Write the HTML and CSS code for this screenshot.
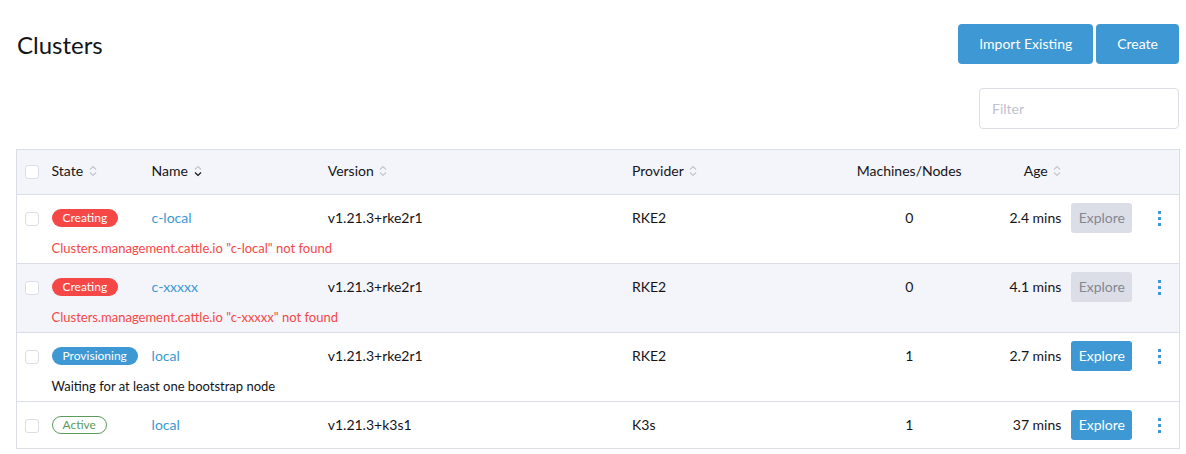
FILE: index.html
```html
<!DOCTYPE html>
<html lang="en">
  <head>
    <meta charset="UTF-8" />
    <title>Clusters</title>
    <link rel="stylesheet" href="styles.css">
  </head>
  <body>
    <div class="page">
      <header class="title-bar">
        <h1>Clusters</h1>
        <div class="actions">
          <button class="btn">Import Existing</button>
          <button class="btn">Create</button>
        </div>
      </header>

      <div class="filter-bar">
        <input type="text" class="filter" placeholder="Filter" />
      </div>

      <table class="clusters">
        <colgroup>
          <col style="width: 27px" />
          <col style="width: 100px" />
          <col style="width: 176px" />
          <col style="width: 304px" />
          <col style="width: 206px" />
          <col style="width: 158px" />
          <col style="width: 83px" />
          <col style="width: 69px" />
          <col style="width: 39px" />
        </colgroup>
        <thead>
          <tr>
            <th><span class="check"></span></th>
            <th>State <svg class="sort" viewBox="0 0 8 12"><path d="M1 4.5 4 1.5 7 4.5" /><path d="M1 7.5 4 10.5 7 7.5" /></svg></th>
            <th>Name <svg class="sort active" viewBox="0 0 8 12"><path d="M1 4.5 4 1.5 7 4.5" /><path class="on" d="M1 7.5 4 10.5 7 7.5" /></svg></th>
            <th>Version <svg class="sort" viewBox="0 0 8 12"><path d="M1 4.5 4 1.5 7 4.5" /><path d="M1 7.5 4 10.5 7 7.5" /></svg></th>
            <th>Provider <svg class="sort" viewBox="0 0 8 12"><path d="M1 4.5 4 1.5 7 4.5" /><path d="M1 7.5 4 10.5 7 7.5" /></svg></th>
            <th class="center">Machines/Nodes</th>
            <th class="right">Age <svg class="sort" viewBox="0 0 8 12"><path d="M1 4.5 4 1.5 7 4.5" /><path d="M1 7.5 4 10.5 7 7.5" /></svg></th>
            <th></th>
            <th></th>
          </tr>
        </thead>

        <tbody>
          <tr class="main">
            <td><span class="check"></span></td>
            <td><span class="badge error">Creating</span></td>
            <td><a href="#">c-local</a></td>
            <td>v1.21.3+rke2r1</td>
            <td>RKE2</td>
            <td class="center">0</td>
            <td class="right">2.4 mins</td>
            <td><button class="explore" disabled>Explore</button></td>
            <td class="center"><span class="kebab"><i></i><i></i><i></i></span></td>
          </tr>
          <tr class="sub">
            <td></td>
            <td colspan="8" class="msg error-text">Clusters.management.cattle.io "c-local" not found</td>
          </tr>
        </tbody>

        <tbody class="odd">
          <tr class="main">
            <td><span class="check"></span></td>
            <td><span class="badge error">Creating</span></td>
            <td><a href="#">c-xxxxx</a></td>
            <td>v1.21.3+rke2r1</td>
            <td>RKE2</td>
            <td class="center">0</td>
            <td class="right">4.1 mins</td>
            <td><button class="explore" disabled>Explore</button></td>
            <td class="center"><span class="kebab"><i></i><i></i><i></i></span></td>
          </tr>
          <tr class="sub">
            <td></td>
            <td colspan="8" class="msg error-text">Clusters.management.cattle.io "c-xxxxx" not found</td>
          </tr>
        </tbody>

        <tbody>
          <tr class="main">
            <td><span class="check"></span></td>
            <td><span class="badge info">Provisioning</span></td>
            <td><a href="#">local</a></td>
            <td>v1.21.3+rke2r1</td>
            <td>RKE2</td>
            <td class="center">1</td>
            <td class="right">2.7 mins</td>
            <td><button class="explore">Explore</button></td>
            <td class="center"><span class="kebab"><i></i><i></i><i></i></span></td>
          </tr>
          <tr class="sub">
            <td></td>
            <td colspan="8" class="msg">Waiting for at least one bootstrap node</td>
          </tr>
        </tbody>

        <tbody>
          <tr class="main">
            <td><span class="check"></span></td>
            <td><span class="badge success">Active</span></td>
            <td><a href="#">local</a></td>
            <td>v1.21.3+k3s1</td>
            <td>K3s</td>
            <td class="center">1</td>
            <td class="right">37 mins</td>
            <td><button class="explore">Explore</button></td>
            <td class="center"><span class="kebab"><i></i><i></i><i></i></span></td>
          </tr>
        </tbody>
      </table>
    </div>
  </body>
</html>
```

FILE: styles.css
```css
body {
  margin: 0;
  font-family: Lato, "Noto Sans", sans-serif;
  font-size: 14px;
  color: #141419;
  background-color: #fff;
}
.page {
  width: 1164px;
  margin-left: 16px;
}
.title-bar {
  display: flex;
  justify-content: space-between;
  align-items: center;
  margin-top: 24px;
  height: 40px;
}
h1 {
  margin: 0 0 0 1px;
  font-size: 24px;
  font-weight: 400;
}
.actions {
  display: flex;
  gap: 3px;
  margin-right: 1px;
}
.btn {
  height: 40px;
  padding: 0 21px 1px;
  border: none;
  border-radius: 4px;
  background-color: #3d98d3;
  color: #fff;
  font-family: inherit;
  font-size: 14px;
}
.filter-bar {
  display: flex;
  justify-content: flex-end;
  margin-top: 24px;
  margin-right: 1px;
}
.filter {
  box-sizing: border-box;
  width: 200px;
  height: 41px;
  padding: 0 12px;
  border: 1px solid #dcdee7;
  border-radius: 4px;
  font-family: inherit;
  font-size: 14px;
}
.filter::placeholder {
  color: #c0c2cf;
}
.clusters {
  margin-top: 20px;
  width: 1164px;
  table-layout: fixed;
  border-collapse: collapse;
  border: 1px solid #dcdee7;
}
.clusters th {
  height: 41px;
  padding: 0 8px 3px;
  background-color: #f4f5fa;
  text-align: left;
  font-weight: 400;
  white-space: nowrap;
}
.clusters td {
  padding: 0 8px;
  white-space: nowrap;
}
.clusters th:first-child,
.clusters td:first-child {
  padding-right: 0;
}
.clusters tbody {
  border-top: 1px solid #dcdee7;
}
.clusters tbody.odd {
  background-color: #f4f5fa;
}
.main td {
  height: 45px;
  padding-bottom: 1px;
}
.sub td {
  height: 14px;
  padding-bottom: 8px;
  line-height: 14px;
}
.msg {
  font-size: 13px;
}
.error-text {
  color: #f64747;
}
.center {
  text-align: center !important;
}
.right {
  text-align: right !important;
  padding-right: 10px !important;
}
.clusters td:nth-child(8) {
  padding: 0;
}
.check {
  display: inline-block;
  box-sizing: border-box;
  width: 14px;
  height: 14px;
  border: 1px solid #dcdee7;
  border-radius: 3px;
  background-color: #fff;
  vertical-align: middle;
}
.sort {
  width: 8px;
  height: 12px;
  margin-left: 2px;
  vertical-align: -1px;
  fill: none;
  stroke: #c4c6cf;
  stroke-width: 1.2;
}
.sort .on {
  stroke: #141419;
}
a {
  color: #3d98d3;
  text-decoration: none;
}
.badge {
  display: inline-block;
  box-sizing: border-box;
  height: 18px;
  padding: 0 10px;
  border: 1px solid transparent;
  border-radius: 9px;
  font-size: 12px;
  line-height: 16px;
  vertical-align: middle;
}
.badge.error {
  background-color: #f64747;
  color: #fff;
}
.badge.info {
  background-color: #3d98d3;
  color: #fff;
}
.badge.success {
  border-color: #5d995d;
  color: #5d995d;
  background-color: #fff;
}
.explore {
  width: 61px;
  height: 30px;
  padding: 0 0 2px;
  border: none;
  border-radius: 3px;
  background-color: #3d98d3;
  color: #fff;
  font-family: inherit;
  font-size: 14px;
  vertical-align: middle;
}
.explore:disabled {
  background-color: #dcdee7;
  color: #858791;
}
.kebab {
  display: inline-flex;
  flex-direction: column;
  gap: 3px;
  vertical-align: middle;
}
.kebab i {
  width: 3px;
  height: 3px;
  background-color: #3d98d3;
}
```
